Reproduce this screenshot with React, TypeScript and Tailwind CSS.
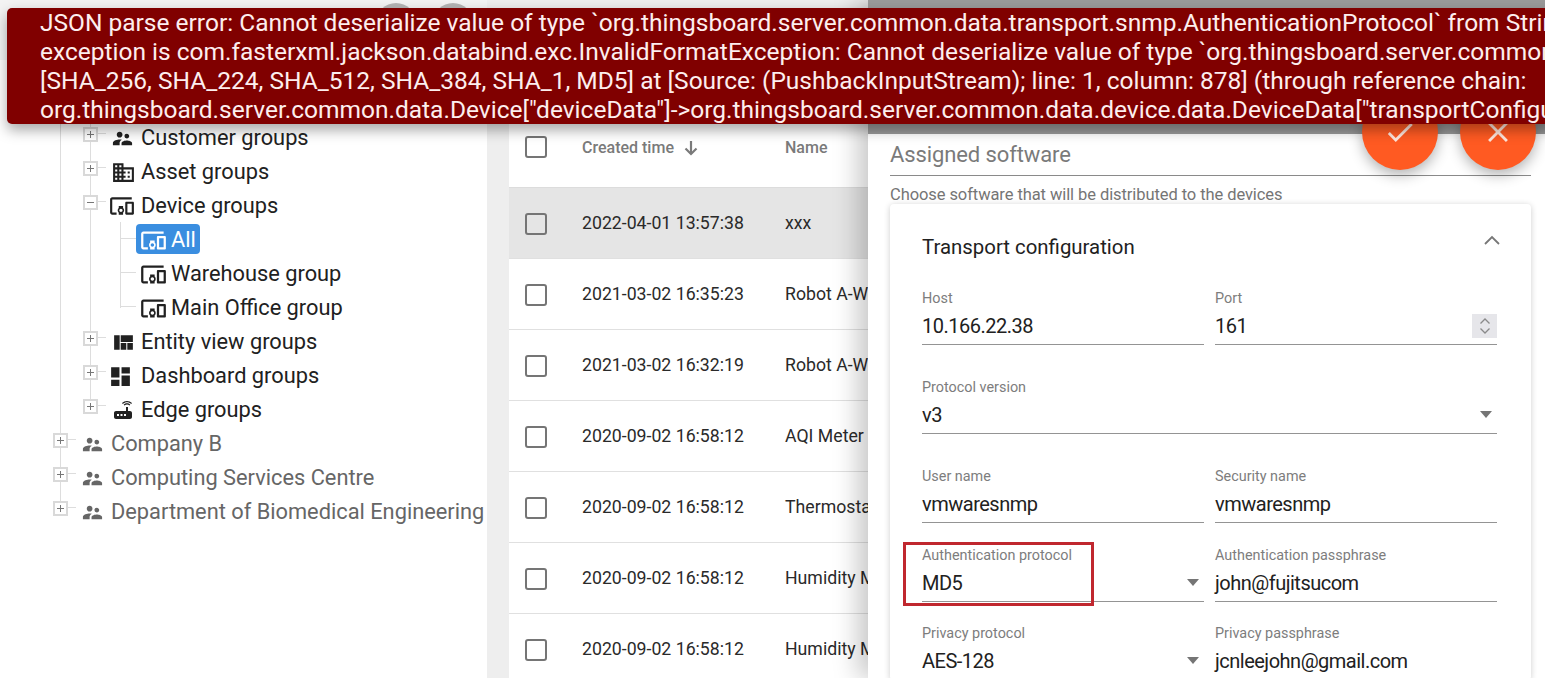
import { ReactNode } from 'react';
import {
  MdSupervisorAccount,
  MdDomain,
  MdDevicesOther,
  MdViewQuilt,
  MdDashboard,
  MdRouter,
  MdCheck,
  MdClose,
} from 'react-icons/md';

const FONT = 'font-[Roboto,"Liberation_Sans",sans-serif]';

const ROWS = [
  { time: '2022-04-01 13:57:38', name: 'xxx', active: true },
  { time: '2021-03-02 16:35:23', name: 'Robot A-W01' },
  { time: '2021-03-02 16:32:19', name: 'Robot A-W02' },
  { time: '2020-09-02 16:58:12', name: 'AQI Meter' },
  { time: '2020-09-02 16:58:12', name: 'Thermostat T1' },
  { time: '2020-09-02 16:58:12', name: 'Humidity Meter' },
  { time: '2020-09-02 16:58:12', name: 'Humidity Meter' },
];

function Toggle({ open }: { open?: boolean }) {
  return (
    <span className="relative z-10 flex h-[15px] w-[15px] shrink-0 -translate-y-[4px] items-center justify-center border-2 border-[#d9d9d9] bg-white text-[#777]">
      <span className="absolute h-px w-[7px] bg-[#777]" />
      {!open && <span className="absolute h-[7px] w-px bg-[#777]" />}
    </span>
  );
}

function GroupRow({ icon, label, open }: { icon: ReactNode; label: string; open?: boolean }) {
  return (
    <div className="relative flex h-[34px] items-center pl-[83px] text-[21.8px] text-[#212121]">
      <Toggle open={open} />
      <span className="absolute left-[98px] top-[12px] h-px w-[8px] bg-[#ddd]" />
      <span className="flex w-[43px] justify-end pr-[6px]">{icon}</span>
      <span>{label}</span>
    </div>
  );
}

function CompanyRow({ label }: { label: string }) {
  return (
    <div className="relative flex h-[34px] items-center pl-[53px] text-[21.8px] text-[#666]">
      <Toggle />
      <span className="absolute left-[68px] top-[12px] h-px w-[8px] bg-[#ddd]" />
      <span className="flex w-[43px] justify-end pr-[6px]">
        <MdSupervisorAccount className="mr-[1px] text-[23px]" />
      </span>
      <span className="whitespace-nowrap">{label}</span>
    </div>
  );
}

function LeafRow({ label, selected }: { label: string; selected?: boolean }) {
  return (
    <div className="relative flex h-[34px] items-center pl-[136px] text-[21.8px] text-[#212121]">
      <span className="absolute left-[120px] top-[15px] h-px w-[16px] bg-[#ddd]" />
      <span className={`-mt-[2px] flex h-[30px] items-center gap-[4px] rounded-[4px] px-[4px] pt-[2px] ${selected ? 'bg-[#3a8ee0] text-white' : ''}`}>
        <MdDevicesOther className="text-[27px]" />
        {label}
      </span>
    </div>
  );
}

function Checkbox() {
  return <span className="h-[22px] w-[22px] shrink-0 rounded-[3px] border-2 border-[#757575]" />;
}

function Field({ label, value, after }: { label: string; value: string; after?: ReactNode }) {
  return (
    <div className="flex h-[55px] flex-col border-b border-[#949494]">
      <div className="h-[17px] pt-[1px] text-[14.4px] leading-[16px] text-[#7d7d7d]">{label}</div>
      <div className="flex h-[37px] items-center justify-between text-[20px] leading-[28px] tracking-[-0.025em] text-[#212121]">
        <span>{value}</span>
        {after}
      </div>
    </div>
  );
}

const caret = <span className="mr-[5px] h-0 w-0 border-x-[6.5px] border-t-[7px] border-x-transparent border-t-[#757575]" />;

export default function App() {
  return (
    <div className={`${FONT} relative flex h-[678px] w-full overflow-hidden bg-[#eeeeee]`}>
      {/* tree */}
      <aside className="relative w-[487px] shrink-0 bg-white pt-[121px]">
        <span className="absolute left-0 top-0 h-[60px] w-full bg-[#f3f3f3]" />
        <span className="absolute left-[60px] top-[120px] h-[390px] w-px bg-[#ddd]" />
        <span className="absolute left-[90px] top-[120px] h-[285px] w-px bg-[#ddd]" />
        <span className="absolute left-[120px] top-[222px] h-[86px] w-px bg-[#ddd]" />
        <GroupRow icon={<MdSupervisorAccount className="mr-[1px] text-[23px]" />} label="Customer groups" />
        <GroupRow icon={<MdDomain className="-mr-[1px] text-[25px]" />} label="Asset groups" />
        <GroupRow icon={<MdDevicesOther className="text-[26px]" />} label="Device groups" open />
        <LeafRow label="All" selected />
        <LeafRow label="Warehouse group" />
        <LeafRow label="Main Office group" />
        <GroupRow icon={<MdViewQuilt className="-mr-[1px] text-[25px]" />} label="Entity view groups" />
        <GroupRow icon={<MdDashboard className="mr-[2px] text-[25px]" />} label="Dashboard groups" />
        <GroupRow icon={<MdRouter className="text-[24px]" />} label="Edge groups" />
        <CompanyRow label="Company B" />
        <CompanyRow label="Computing Services Centre" />
        <CompanyRow label="Department of Biomedical Engineering" />
      </aside>

      {/* device table */}
      <main className="ml-[22px] mt-[60px] w-[359px] shrink-0 overflow-hidden bg-white pt-[52px]">
        <div className="flex h-[76px] items-start gap-[35px] border-b border-[#dcdcdc] px-[16px] pt-[24px] text-[16px] font-medium text-[#7a7a7a]">
          <Checkbox />
          <div className="flex w-[168px] items-center">
            Created time
            <svg className="ml-[10px]" width="14" height="16" viewBox="0 0 14 16" fill="none" stroke="currentColor" strokeWidth="2.2">
              <path d="M7 1 V14" />
              <path d="M1.5 8.5 L7 14 L12.5 8.5" />
            </svg>
          </div>
          <div>Name</div>
        </div>
        {ROWS.map((row, i) => (
          <div
            key={i}
            className={`flex h-[71px] items-center gap-[35px] whitespace-nowrap border-b border-[#e0e0e0] px-[16px] pt-[1px] text-[17.7px] text-[#2a2a2a] ${row.active ? 'bg-[#e5e5e5]' : ''}`}
          >
            <Checkbox />
            <div className="w-[168px] shrink-0">{row.time}</div>
            <div>{row.name}</div>
          </div>
        ))}
      </main>

      {/* details drawer */}
      <section className="relative z-10 flex w-[677px] shrink-0 flex-col bg-white shadow-[-10px_0_24px_rgba(0,0,0,0.22)]">
        <div className="h-[134px] shrink-0 bg-[#9a9a9a]" />
        <div className="pl-[22px] pr-[14px]">
          <div className="flex h-[42px] items-end border-b border-[#8a8a8a] pb-[6px] text-[22px] leading-[28px] tracking-[-0.005em] text-[#7a7a7a]">
            Assigned software
          </div>
          <div className="mt-[9px] h-[19px] text-[16.5px] leading-[20px] tracking-[-0.005em] text-[#757575]">
            Choose software that will be distributed to the devices
          </div>
          <div className="rounded-[4px] bg-white pl-[32px] pr-[34px] shadow-[0_1px_6px_rgba(0,0,0,0.2)]">
            <div className="flex h-[86px] items-start justify-between pt-[29px]">
              <span className="text-[20.4px] leading-[28px] text-[#212121]">Transport configuration</span>
              <svg className="-mr-[4px] mt-[1px]" width="18" height="12" viewBox="0 0 18 12" fill="none" stroke="#777" strokeWidth="1.8">
                <path d="M2 10 L9 3 L16 10" />
              </svg>
            </div>
            <div className="grid grid-cols-2 gap-x-[11px]">
              <Field label="Host" value="10.166.22.38" />
              <Field
                label="Port"
                value="161"
                after={
                  <span className="flex h-[24px] w-[25px] items-center justify-center bg-[#e6e6ea] text-[#8a8a8a]">
                    <svg width="14" height="20" viewBox="0 0 14 20" fill="none" stroke="currentColor" strokeWidth="1.3">
                      <path d="M2.5 7.5 L7 3 L11.5 7.5" />
                      <path d="M2.5 12.5 L7 17 L11.5 12.5" />
                    </svg>
                  </span>
                }
              />
              <div className="col-span-2 mt-[34px]">
                <Field label="Protocol version" value="v3" after={caret} />
              </div>
              <div className="mt-[34px]">
                <Field label="User name" value="vmwaresnmp" />
              </div>
              <div className="mt-[34px]">
                <Field label="Security name" value="vmwaresnmp" />
              </div>
              <div className="mt-[24px]">
                <Field label="Authentication protocol" value="MD5" after={caret} />
              </div>
              <div className="mt-[24px]">
                <Field label="Authentication passphrase" value="john@fujitsucom" />
              </div>
              <div className="mt-[23px]">
                <Field label="Privacy protocol" value="AES-128" after={caret} />
              </div>
              <div className="mt-[23px]">
                <Field label="Privacy passphrase" value="jcnleejohn@gmail.com" />
              </div>
            </div>
          </div>
        </div>
      </section>

      {/* header buttons peeking above the toast */}
      <span className="absolute left-[376px] top-[3px] z-10 h-[40px] w-[40px] rounded-full bg-[#b5b5b5]" />
      <span className="absolute left-[433px] top-[3px] z-10 h-[40px] w-[40px] rounded-full bg-[#b5b5b5]" />

      {/* floating actions */}
      <button className="absolute left-[1362px] top-[94px] z-20 flex h-[76px] w-[76px] items-center justify-center rounded-full bg-[#ff5a22] text-[34px] text-[#ffe6dc] shadow-[0_5px_14px_rgba(0,0,0,0.3)]">
        <MdCheck />
      </button>
      <button className="absolute left-[1460px] top-[94px] z-20 flex h-[76px] w-[76px] items-center justify-center rounded-full bg-[#ff5a22] text-[34px] text-[#ffe6dc] shadow-[0_5px_14px_rgba(0,0,0,0.3)]">
        <MdClose />
      </button>

      {/* screenshot annotation */}
      <span className="absolute left-[903px] top-[542px] z-20 h-[64px] w-[191px] border-[3px] border-[#c0272f]" />

      {/* error toast */}
      <div className="absolute left-[7px] top-[8px] z-30 h-[116px] w-[1600px] overflow-hidden rounded-[5px] bg-[#800000] pl-[33px] text-[24.5px] leading-[29px] whitespace-nowrap text-[#fdeeee] shadow-[0_6px_14px_rgba(0,0,0,0.35)]">
        <div>JSON parse error: Cannot deserialize value of type `org.thingsboard.server.common.data.transport.snmp.AuthenticationProtocol` from String</div>
        <div>exception is com.fasterxml.jackson.databind.exc.InvalidFormatException: Cannot deserialize value of type `org.thingsboard.server.common.data</div>
        <div>[SHA_256, SHA_224, SHA_512, SHA_384, SHA_1, MD5] at [Source: (PushbackInputStream); line: 1, column: 878] (through reference chain:</div>
        <div>org.thingsboard.server.common.data.Device["deviceData"]-&gt;org.thingsboard.server.common.data.device.data.DeviceData["transportConfiguration"]</div>
      </div>
    </div>
  );
}
